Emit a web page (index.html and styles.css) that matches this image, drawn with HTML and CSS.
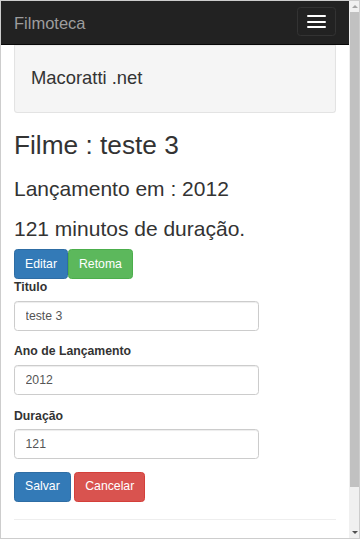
FILE: index.html
```html
<!DOCTYPE html>
<html lang="pt">
<head>
    <meta charset="UTF-8">
    <meta name="viewport" content="width=device-width, initial-scale=1.0">
    <title>Filmoteca</title>
    <link rel="stylesheet" href="styles.css">
</head>
<body>
    <div class="window">
        <div class="page">
            <nav class="navbar">
                <a class="brand" href="#">Filmoteca</a>
                <button class="toggle" type="button">
                    <span class="bar"></span>
                    <span class="bar"></span>
                    <span class="bar"></span>
                </button>
            </nav>
            <div class="container">
                <div class="well">Macoratti .net</div>

                <h2>Filme : teste 3</h2>
                <h3>Lançamento em : 2012</h3>
                <h3>121 minutos de duração.</h3>

                <div class="actions">
                    <button class="btn btn-primary">Editar</button><button class="btn btn-success">Retoma</button>
                </div>

                <form>
                    <div class="form-group">
                        <label for="titulo">Titulo</label>
                        <input type="text" id="titulo" class="form-control" value="teste 3">
                    </div>
                    <div class="form-group">
                        <label for="ano">Ano de Lançamento</label>
                        <input type="text" id="ano" class="form-control" value="2012">
                    </div>
                    <div class="form-group">
                        <label for="duracao">Duração</label>
                        <input type="text" id="duracao" class="form-control" value="121">
                    </div>
                    <div class="form-buttons">
                        <button type="button" class="btn btn-primary">Salvar</button>
                        <button type="button" class="btn btn-danger">Cancelar</button>
                    </div>
                </form>
                <hr>
            </div>
        </div>
        <div class="scrollbar">
            <div class="arrow"><span class="arrow-up"></span></div>
            <div class="thumb"></div>
            <div class="track"></div>
            <div class="arrow"><span class="arrow-down"></span></div>
        </div>
    </div>
</body>
</html>
```

FILE: styles.css
```css
* {
    box-sizing: border-box;
}
html, body {
    margin: 0;
    padding: 0;
    overflow: hidden;
}
body {
    font-family: "Liberation Sans", Arial, sans-serif;
    font-size: 12.25px;
    line-height: 17.5px;
    color: #333;
    background: #fff;
}
.window {
    width: 360px;
    height: 539px;
    border: 1px solid #cdcdcd;
    display: flex;
    overflow: hidden;
}
.page {
    flex: 1;
    overflow: hidden;
    background: #fff;
}

/* navbar */
.navbar {
    height: 44px;
    background: #222;
    border-bottom: 1px solid #080808;
    display: flex;
    justify-content: space-between;
    align-items: flex-start;
    padding: 0 13px;
}
.brand {
    font-size: 16.5px;
    line-height: 44px;
    color: #9d9d9d;
    text-decoration: none;
}
.toggle {
    margin-top: 6px;
    width: 39px;
    height: 29px;
    background: transparent;
    border: 1px solid #333;
    border-radius: 3.5px;
    display: flex;
    flex-direction: column;
    align-items: center;
    justify-content: center;
    gap: 3.5px;
    padding: 0;
}
.bar {
    display: block;
    width: 19.5px;
    height: 2px;
    background: #fff;
    border-radius: 1px;
}

/* content */
.container {
    padding: 0 13px;
}
.well {
    height: 68px;
    background: #f5f5f5;
    border: 1px solid #e3e3e3;
    border-top: none;
    border-radius: 0 0 3.5px 3.5px;
    box-shadow: inset 0 1px 1px rgba(0, 0, 0, 0.05);
    display: flex;
    align-items: center;
    padding: 0 16px 1px;
    font-size: 18.4px;
}
h2, h3 {
    font-weight: 500;
    line-height: 1.1;
    margin: 17.5px 0 8.75px;
}
h2 {
    font-size: 26.25px;
}
h3 {
    font-size: 21px;
}

/* buttons */
.actions, .form-buttons {
    display: flex;
}
.form-buttons {
    gap: 3.5px;
}
.btn {
    font-family: inherit;
    font-size: 12.25px;
    line-height: 17.5px;
    padding: 5.25px 10px;
    border: 1px solid transparent;
    border-radius: 3.5px;
    color: #fff;
    cursor: pointer;
}
.btn-primary {
    background: #337ab7;
    border-color: #2e6da4;
}
.btn-success {
    background: #5cb85c;
    border-color: #4cae4c;
}
.btn-danger {
    background: #d9534f;
    border-color: #d43f3a;
}

/* form */
form {
    margin: 0;
}
.form-group {
    margin-bottom: 12.5px;
}
label {
    display: block;
    font-weight: bold;
    margin-bottom: 4.4px;
}
.form-control {
    display: block;
    width: 245px;
    height: 29.75px;
    padding: 5.25px 10.5px;
    font-family: inherit;
    font-size: 12.25px;
    line-height: 17.5px;
    color: #555;
    background: #fff;
    border: 1px solid #ccc;
    border-radius: 3.5px;
    box-shadow: inset 0 1px 1px rgba(0, 0, 0, 0.075);
}
hr {
    margin: 17px 0;
    border: 0;
    border-top: 1px solid #eee;
}

/* scrollbar */
.scrollbar {
    width: 10px;
    background: #f0f0f0;
    display: flex;
    flex-direction: column;
    padding-left: 1px;
}
.arrow {
    height: 11px;
    display: flex;
    align-items: center;
    justify-content: center;
}
.arrow-up {
    width: 0;
    height: 0;
    border-left: 3px solid transparent;
    border-right: 3px solid transparent;
    border-bottom: 3px solid #a3a3a3;
}
.arrow-down {
    width: 0;
    height: 0;
    border-left: 3px solid transparent;
    border-right: 3px solid transparent;
    border-top: 3px solid #505050;
}
.thumb {
    height: 475px;
    background: #c1c1c1;
}
.track {
    flex: 1;
}
```
